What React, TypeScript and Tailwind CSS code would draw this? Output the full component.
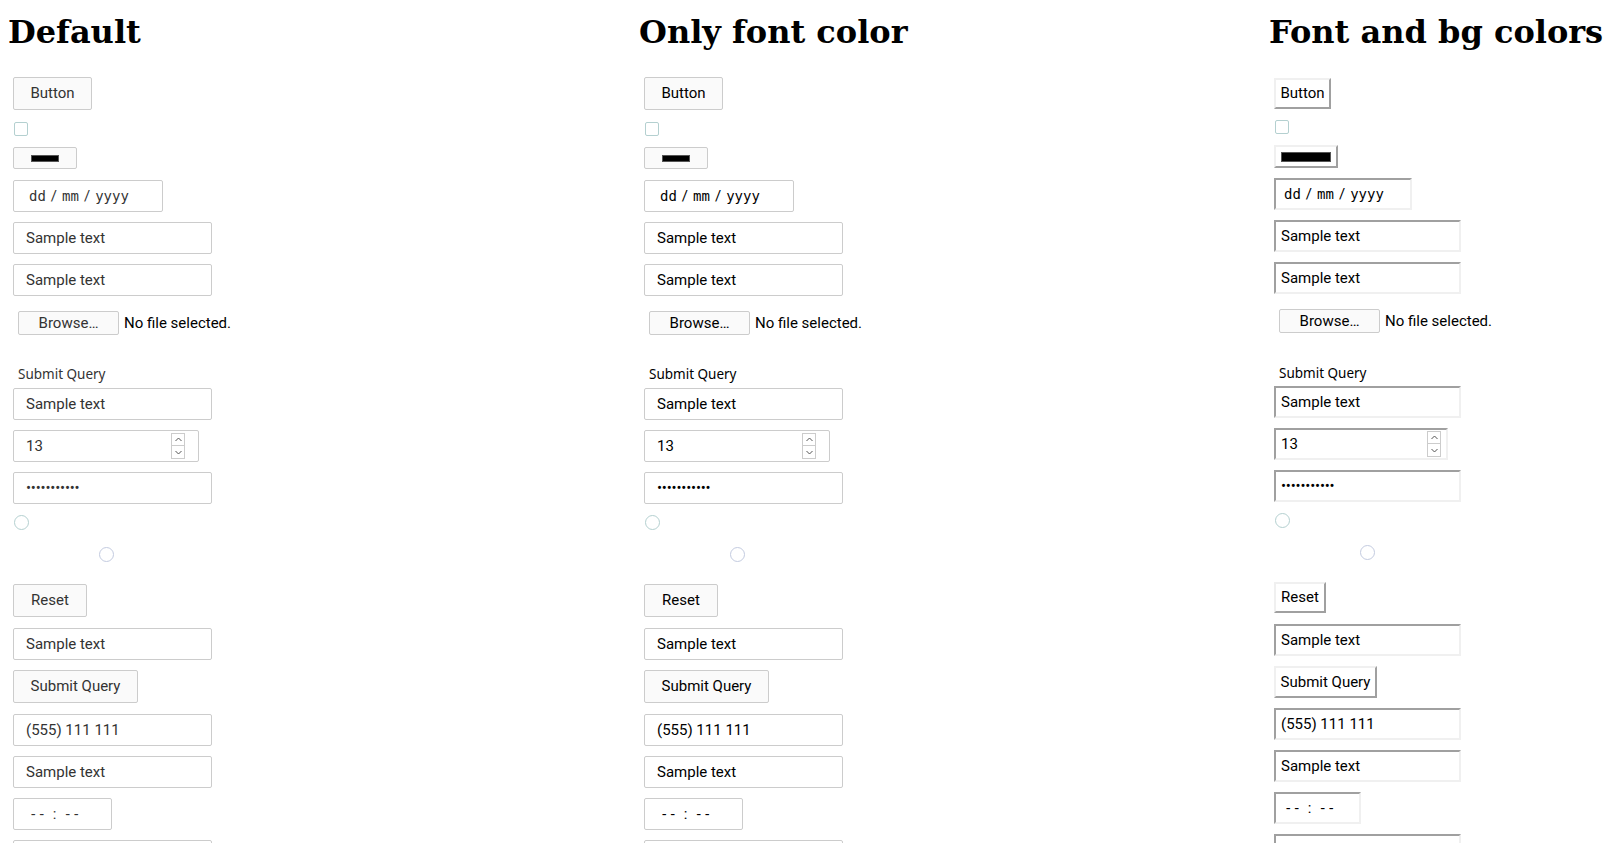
import React from "react";

type V = 0 | 1 | 2;

const txt = (v: V) => (v === 0 ? "text-[#333333]" : "text-black");
const inputBox = (v: V) =>
  v === 2
    ? "border-2 border-t-[#a0a0a0] border-l-[#a0a0a0] border-r-[#f0f0f0] border-b-[#f0f0f0] bg-white"
    : "border border-[#cccccc] rounded-[2px] bg-white";
const btnBox = (v: V) =>
  v === 2
    ? "border-2 border-t-[#f0f0f0] border-l-[#f0f0f0] border-r-[#a0a0a0] border-b-[#a0a0a0] bg-white"
    : "border border-[#cccccc] rounded-[2px] bg-[#fafafa]";
const padL = (v: V) => (v === 2 ? "pl-[5px]" : "pl-[12px]");
const roboto = "font-['Roboto',_'Liberation_Sans',_sans-serif] text-[15px]";
const mono = "font-['DejaVu_Sans_Mono',_monospace] text-[14px]";

function TextBox({ v, value, mt, w }: { v: V; value: React.ReactNode; mt: string; w?: string }) {
  const width = w ?? (v === 2 ? "w-[187px]" : "w-[199px]");
  return (
    <div className={`${mt} ${width} h-[32px] flex items-center ${inputBox(v)} ${padL(v)} ${roboto} ${txt(v)} whitespace-nowrap`}>
      {value}
    </div>
  );
}

function Btn({ v, label, mt, w, h }: { v: V; label: string; mt: string; w: string; h: string }) {
  return (
    <div className={`${mt} ${w} ${h} flex items-center justify-center ${btnBox(v)} ${roboto} ${txt(v)} whitespace-nowrap`}>
      {label}
    </div>
  );
}

function Check({ mt }: { mt: string }) {
  return <div className={`${mt} ml-px w-[14px] h-[14px] border border-[#b4d0d0] rounded-[2px] bg-white`} />;
}

function Radio({ mt, ml, c }: { mt: string; ml: string; c: string }) {
  return <div className={`${mt} ${ml} w-[15px] h-[15px] border ${c} rounded-full bg-white`} />;
}

function Color({ v, mt }: { v: V; mt: string }) {
  return (
    <div className={`${mt} w-[64px] ${v === 2 ? "h-[23px]" : "h-[22px]"} flex items-center justify-center ${btnBox(v)}`}>
      <div className={`${v === 2 ? "w-[50px] h-[10px]" : "w-[28px] h-[7px]"} bg-black border border-[#555555]`} />
    </div>
  );
}

function Sep({ s, mx }: { s: string; mx: string }) {
  return <span className={`font-['Roboto',_sans-serif] text-[15px] ${mx}`}>{s}</span>;
}

function DateBox({ v, mt }: { v: V; mt: string }) {
  return (
    <div className={`${mt} ${v === 2 ? "w-[138px] pl-[8px]" : "w-[150px] pl-[15px]"} h-[32px] flex items-center ${inputBox(v)} ${txt(v)} whitespace-nowrap`}>
      <span className={mono}>dd</span>
      <Sep s="/" mx="mx-[5px]" />
      <span className={mono}>mm</span>
      <Sep s="/" mx="mx-[5px]" />
      <span className={mono}>yyyy</span>
    </div>
  );
}

function TimeBox({ v, mt }: { v: V; mt: string }) {
  return (
    <div className={`${mt} ${v === 2 ? "w-[87px] pl-[8px]" : "w-[99px] pl-[15px]"} h-[32px] flex items-center ${inputBox(v)} ${txt(v)} whitespace-nowrap`}>
      <span className={mono}>--</span>
      <Sep s=":" mx="mx-[7px]" />
      <span className={mono}>--</span>
    </div>
  );
}

function NumberBox({ v, mt }: { v: V; mt: string }) {
  return (
    <div className={`${mt} ${v === 2 ? "w-[174px] pr-[5px]" : "w-[186px] pr-[13px]"} h-[32px] flex items-center justify-between ${inputBox(v)} ${padL(v)} ${roboto} ${txt(v)}`}>
      <span>13</span>
      <div className="flex flex-col">
        <div className="w-[14px] h-[13px] border border-[#cccccc] flex items-center justify-center bg-white">
          <svg width="7" height="5" viewBox="0 0 7 5">
            <polyline points="0.5,4 3.5,1 6.5,4" fill="none" stroke="#555" strokeWidth="1" />
          </svg>
        </div>
        <div className="w-[14px] h-[13px] border border-t-0 border-[#cccccc] flex items-center justify-center bg-white">
          <svg width="7" height="5" viewBox="0 0 7 5">
            <polyline points="0.5,1 3.5,4 6.5,1" fill="none" stroke="#555" strokeWidth="1" />
          </svg>
        </div>
      </div>
    </div>
  );
}

function FileRow({ v, mt }: { v: V; mt: string }) {
  return (
    <div className={`${mt} ml-[5px] flex items-center h-[24px] ${roboto} whitespace-nowrap`}>
      <div className={`w-[101px] h-[24px] flex items-center justify-center border border-[#cccccc] rounded-[2px] bg-[#fafafa] ${txt(v)}`}>
        Browse…
      </div>
      <span className="ml-[5px] text-black">No file selected.</span>
    </div>
  );
}

function Label({ v, mt }: { v: V; mt: string }) {
  return (
    <div className={`${mt} ml-[5px] h-[18px] leading-[18px] font-['Noto_Sans',_sans-serif] text-[13.5px] ${txt(v)} whitespace-nowrap`}>
      Submit Query
    </div>
  );
}

function Column({ v, title }: { v: V; title: string }) {
  const a = v === 2;
  return (
    <div className="flex flex-col items-start">
      <h1
        className={`font-['DejaVu_Serif',_serif] font-bold text-[32px] leading-[37px] mt-[14px] ${a ? "mb-[27px]" : "mb-[26px]"} text-black whitespace-nowrap`}
      >
        {title}
      </h1>
      <div className="flex flex-col items-start pl-[5px]">
        <Btn v={v} label="Button" mt="mt-0" w={a ? "w-[57px]" : "w-[79px]"} h={a ? "h-[31px]" : "h-[33px]"} />
        <Check mt={a ? "mt-[11px]" : "mt-[12px]"} />
        <Color v={v} mt="mt-[11px]" />
        <DateBox v={v} mt={a ? "mt-[10px]" : "mt-[11px]"} />
        <TextBox v={v} value="Sample text" mt="mt-[10px]" />
        <TextBox v={v} value="Sample text" mt="mt-[10px]" />
        <FileRow v={v} mt="mt-[15px]" />
        <Label v={v} mt={a ? "mt-[31px]" : "mt-[30px]"} />
        <TextBox v={v} value="Sample text" mt={a ? "mt-[4px]" : "mt-[5px]"} />
        <NumberBox v={v} mt="mt-[10px]" />
        <TextBox v={v} value={<span className="tracking-[-0.2px]">•••••••••••</span>} mt="mt-[10px]" />
        <Radio mt="mt-[11px]" ml="ml-px" c="border-[#b4d0d0]" />
        <Radio mt="mt-[17px]" ml="ml-[86px]" c="border-[#c3cbe0]" />
        <Btn v={v} label="Reset" mt="mt-[22px]" w={a ? "w-[52px]" : "w-[74px]"} h={a ? "h-[31px]" : "h-[33px]"} />
        <TextBox v={v} value="Sample text" mt="mt-[11px]" />
        <Btn v={v} label="Submit Query" mt="mt-[10px]" w={a ? "w-[103px]" : "w-[125px]"} h={a ? "h-[32px]" : "h-[33px]"} />
        <TextBox v={v} value="(555) 111 111" mt={a ? "mt-[10px]" : "mt-[11px]"} />
        <TextBox v={v} value="Sample text" mt="mt-[10px]" />
        <TimeBox v={v} mt="mt-[10px]" />
        <TextBox v={v} value="" mt="mt-[10px]" />
      </div>
    </div>
  );
}

export default function App() {
  return (
    <div className="w-[1624px] h-[843px] overflow-hidden bg-white">
      <div className="grid grid-cols-[631px_630px_1fr] pl-[8px]">
        <Column v={0} title="Default" />
        <Column v={1} title="Only font color" />
        <Column v={2} title="Font and bg colors" />
      </div>
    </div>
  );
}
